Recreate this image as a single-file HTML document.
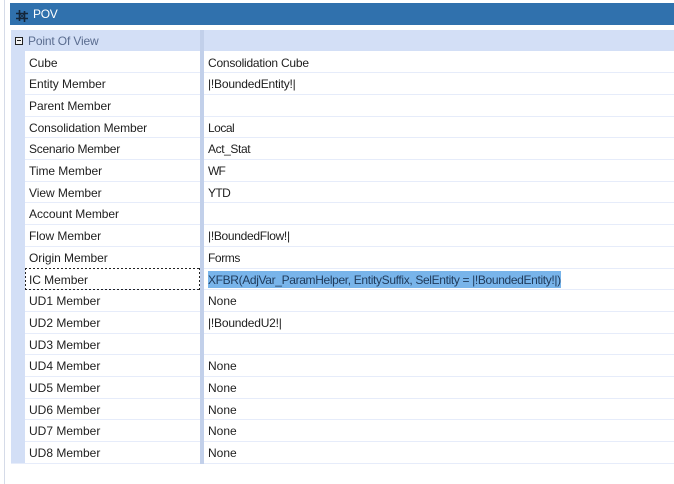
<!DOCTYPE html>
<html><head><meta charset="utf-8">
<style>
html,body{margin:0;padding:0;background:#fff}
body{width:674px;height:484px;position:relative;overflow:hidden;font-family:"Liberation Sans",sans-serif;font-size:12px;color:#1e1e1e}
div{position:absolute;white-space:nowrap}
.l{left:29px;height:22px;line-height:22px;letter-spacing:-.05px}
.v{left:208px;height:22px;line-height:22px;letter-spacing:-.2px}
.h{left:25px;width:649px;height:1px;background:#e6ecfa}
.dx{left:25px;width:175px;height:1px;background:repeating-linear-gradient(90deg,#222 0 2px,transparent 2px 4px)}
.dy{top:268px;width:1px;height:22px;background:repeating-linear-gradient(180deg,#222 0 2px,transparent 2px 4px)}
</style></head><body>
<div style="left:4px;top:0;width:1px;height:484px;background:#d5dbe8"></div>
<div style="left:10px;top:3px;width:664px;height:22px;background:#3071ad"></div>
<svg style="position:absolute;left:15px;top:9px" width="14" height="14" viewBox="0 0 14 14" fill="none" stroke="#14263a" stroke-width="1.6"><path d="M4.500 1v11M9.500 2v11M1 4.500h12M1 9.500h12"/><path d="M4.500 4.500l5 5M9.500 4.500l-5 5" stroke-width=".8"/></svg>
<div style="left:33px;top:3px;height:22px;line-height:23px;color:#fff;font-size:12px;letter-spacing:-.3px">POV</div>
<div style="left:11px;top:30px;width:663px;height:21px;background:#d3dff6"></div>
<div style="left:11px;top:51px;width:14px;height:413px;background:#d3dff6"></div>
<div style="left:15px;top:37px;width:6px;height:6px;border:1px solid #222;background:#f2f2f2"></div>
<div style="left:17px;top:40px;width:4px;height:1px;background:#222"></div>
<div style="left:28px;top:30px;height:21px;line-height:22px;color:#5a6c8f;letter-spacing:-.15px">Point Of View</div>
<div class="h" style="top:72px"></div><div class="h" style="top:94px"></div><div class="h" style="top:116px"></div><div class="h" style="top:137px"></div><div class="h" style="top:159px"></div><div class="h" style="top:181px"></div><div class="h" style="top:202px"></div><div class="h" style="top:224px"></div><div class="h" style="top:246px"></div><div class="h" style="top:268px;left:200px;width:474px"></div><div class="h" style="top:289px"></div><div class="h" style="top:311px"></div><div class="h" style="top:333px"></div><div class="h" style="top:354px"></div><div class="h" style="top:376px"></div><div class="h" style="top:398px"></div><div class="h" style="top:419px"></div><div class="h" style="top:441px"></div><div class="h" style="top:463px;left:11px;width:663px"></div>
<div style="left:200px;top:30px;width:4px;height:434px;background:#c2d0ea"></div>
<div class="l" style="top:52px">Cube</div><div class="v" style="top:52px;letter-spacing:-.22px">Consolidation Cube</div>
<div class="l" style="top:73px">Entity Member</div><div class="v" style="top:73px">|!BoundedEntity!|</div>
<div class="l" style="top:95px">Parent Member</div>
<div class="l" style="top:117px;letter-spacing:-.1px">Consolidation Member</div><div class="v" style="top:117px;letter-spacing:-.5px">Local</div>
<div class="l" style="top:138px;letter-spacing:-.25px">Scenario Member</div><div class="v" style="top:138px;letter-spacing:-.4px">Act_Stat</div>
<div class="l" style="top:160px">Time Member</div><div class="v" style="top:160px;letter-spacing:-.8px">WF</div>
<div class="l" style="top:182px">View Member</div><div class="v" style="top:182px;letter-spacing:-.6px">YTD</div>
<div class="l" style="top:203px">Account Member</div>
<div class="l" style="top:225px">Flow Member</div><div class="v" style="top:225px;letter-spacing:-.3px">|!BoundedFlow!|</div>
<div class="l" style="top:247px">Origin Member</div><div class="v" style="top:247px;letter-spacing:-.4px">Forms</div>
<div class="dx" style="top:268px"></div><div class="dx" style="top:289px"></div>
<div class="dy" style="left:25px"></div><div class="dy" style="left:199px"></div>
<div class="l" style="top:269px">IC Member</div>
<div style="left:208px;top:271px;width:353px;height:17px;background:#78b4ea"></div>
<div class="v" style="top:269px;color:#1f3a5a;letter-spacing:-.35px">XFBR(AdjVar_ParamHelper, EntitySuffix, SelEntity = |!BoundedEntity!|)</div>
<div class="l" style="top:290px;letter-spacing:0">UD1 Member</div><div class="v" style="top:290px;letter-spacing:0">None</div>
<div class="l" style="top:312px;letter-spacing:0">UD2 Member</div><div class="v" style="top:312px">|!BoundedU2!|</div>
<div class="l" style="top:334px;letter-spacing:0">UD3 Member</div>
<div class="l" style="top:355px;letter-spacing:0">UD4 Member</div><div class="v" style="top:355px;letter-spacing:0">None</div>
<div class="l" style="top:377px;letter-spacing:0">UD5 Member</div><div class="v" style="top:377px;letter-spacing:0">None</div>
<div class="l" style="top:399px;letter-spacing:0">UD6 Member</div><div class="v" style="top:399px;letter-spacing:0">None</div>
<div class="l" style="top:420px;letter-spacing:0">UD7 Member</div><div class="v" style="top:420px;letter-spacing:0">None</div>
<div class="l" style="top:442px;letter-spacing:0">UD8 Member</div><div class="v" style="top:442px;letter-spacing:0">None</div>
</body></html>
